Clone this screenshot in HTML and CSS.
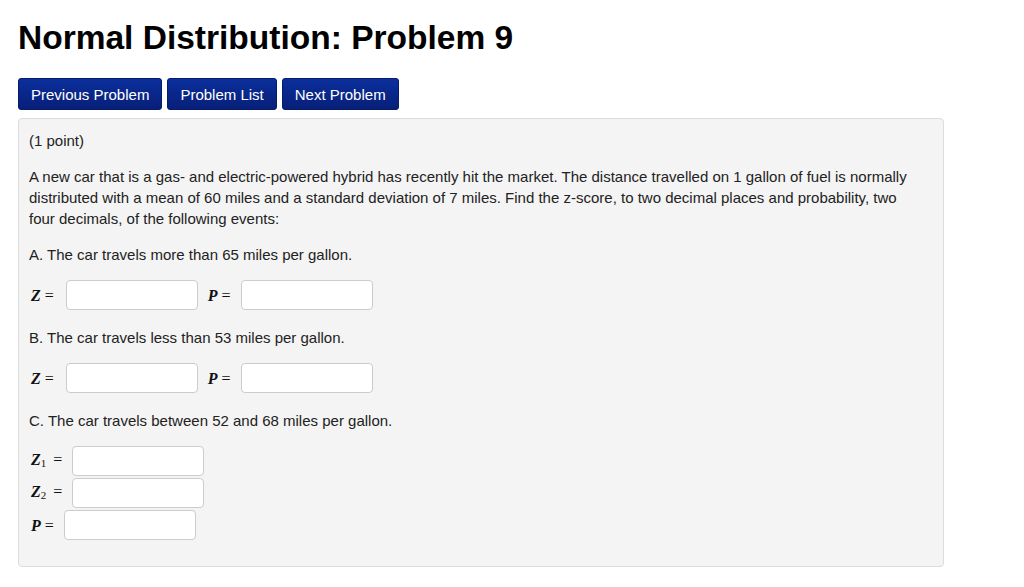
FILE: index.html
```html
<!DOCTYPE html>
<html lang="en">
<head>
  <meta charset="UTF-8">
  <title>Normal Distribution: Problem 9</title>
  <link rel="stylesheet" href="styles.css">
</head>
<body>
  <h1 class="page-title">Normal Distribution: Problem 9</h1>

  <div class="nav-buttons">
    <button class="nav-btn">Previous Problem</button>
    <button class="nav-btn">Problem List</button>
    <button class="nav-btn">Next Problem</button>
  </div>

  <div class="problem">
    <p class="points">(1 point)</p>

    <p class="statement">
      A new car that is a gas- and electric-powered hybrid has recently hit the market. The distance travelled on 1 gallon of fuel is normally distributed with a mean of 60 miles and a standard deviation of 7 miles. Find the z-score, to two decimal places and probability, two four decimals, of the following events:
    </p>

    <p class="part">A. The car travels more than 65 miles per gallon.</p>
    <div class="answer-row">
      <span class="math"><i>Z</i> =</span>
      <input type="text" class="answer">
      <span class="math spaced"><i>P</i> =</span>
      <input type="text" class="answer">
    </div>

    <p class="part">B. The car travels less than 53 miles per gallon.</p>
    <div class="answer-row">
      <span class="math"><i>Z</i> =</span>
      <input type="text" class="answer">
      <span class="math spaced"><i>P</i> =</span>
      <input type="text" class="answer">
    </div>

    <p class="part">C. The car travels between 52 and 68 miles per gallon.</p>
    <div class="answer-stack">
      <div class="stack-row">
        <span class="math"><i>Z</i><sub>1</sub> =</span>
        <input type="text" class="answer">
      </div>
      <div class="stack-row">
        <span class="math"><i>Z</i><sub>2</sub> =</span>
        <input type="text" class="answer">
      </div>
      <div class="stack-row">
        <span class="math"><i>P</i> =</span>
        <input type="text" class="answer">
      </div>
    </div>
  </div>
</body>
</html>
```

FILE: styles.css
```css
body {
  margin: 0;
  padding: 0 18px;
  font-family: "Liberation Sans", Arial, sans-serif;
  font-size: 15px;
  color: #222;
  background-color: #fff;
}

.page-title {
  margin: 18px 0 0;
  font-size: 33.5px;
  line-height: 40px;
  font-weight: bold;
  color: #000;
}

.nav-buttons {
  display: flex;
  gap: 5px;
  margin-top: 20px;
}

.nav-btn {
  height: 32px;
  padding: 0 12px;
  background-color: #0a2a8c;
  background-image: linear-gradient(#0b2f9c, #071f78);
  color: #fff;
  border: 1px solid #061c6a;
  border-radius: 3px;
  font-family: "Liberation Sans", Arial, sans-serif;
  font-size: 15px;
  cursor: pointer;
}

.problem {
  width: 889px;
  margin-top: 8px;
  padding: 11px 25px 26px 10px;
  background-color: #f4f4f4;
  border: 1px solid #dcdcdc;
  border-radius: 4px;
  line-height: 21px;
}

.problem p {
  margin: 0;
}

.statement {
  margin-top: 15px !important;
}

.part {
  margin-top: 15px !important;
}

.answer-row + .part {
  margin-top: 17px !important;
}

.answer-row {
  display: flex;
  align-items: center;
  margin-top: 15px;
}

.math {
  font-family: "Liberation Serif", "Times New Roman", serif;
  font-size: 16px;
  padding: 0 10px 0 2px;
  color: #111;
}

.answer-row .math:first-child {
  padding-right: 12px;
}

.math i {
  font-weight: bold;
}

.math sub {
  font-size: 11px;
  vertical-align: -2px;
  margin-right: 3px;
}

.spaced {
  margin-left: 8px;
}

.answer {
  width: 132px;
  height: 30px;
  box-sizing: border-box;
  border: 1px solid #ccc;
  border-radius: 4px;
  background: #fff;
}

.answer-stack {
  display: flex;
  flex-direction: column;
  gap: 2px;
  margin-top: 15px;
}

.stack-row {
  display: flex;
  align-items: center;
}
```
